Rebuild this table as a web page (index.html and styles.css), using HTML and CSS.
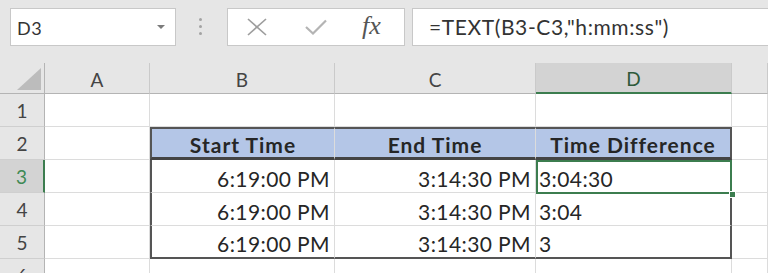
FILE: index.html
```html
<html>
<head>
<meta charset="utf-8">
<link rel="stylesheet" href="styles.css">
<title>Time difference</title>
</head>
<body>
    <div class="toolbar">
        <div class="nameBox">
            <span>D3</span>
            <svg class="dropArrow" width="8" height="4" viewBox="0 0 8 4"><polygon points="0,0 8,0 4,4" fill="#7b7b7b"/></svg>
        </div>
        <div class="grip"><i></i><i></i><i></i></div>
        <div class="fxButtons">
            <svg class="cancel" width="20" height="18" viewBox="0 0 20 18">
                <line x1="1" y1="1" x2="19" y2="17" stroke="#9d9d9d" stroke-width="1.6"/>
                <line x1="19" y1="1" x2="1" y2="17" stroke="#9d9d9d" stroke-width="1.6"/>
            </svg>
            <svg class="enter" width="22" height="16" viewBox="0 0 22 16">
                <polyline points="1,8 8,14.5 21,1.5" fill="none" stroke="#b4b4b4" stroke-width="2.2"/>
            </svg>
            <span class="fx">fx</span>
        </div>
        <div class="formula">=TEXT(B3-C3,"h:mm:ss")</div>
    </div>

    <div class="sheet">
        <!-- column headers -->
        <div class="c corner">
            <svg width="24" height="22" viewBox="0 0 24 22"><polygon points="24,0 24,22 0,22" fill="#bcbcbc"/></svg>
        </div>
        <div class="c ch">A</div>
        <div class="c ch">B</div>
        <div class="c ch">C</div>
        <div class="c ch selCol">D</div>
        <div class="c ch"></div>

        <!-- row 1 -->
        <div class="c rh">1</div>
        <div class="c"></div>
        <div class="c"></div>
        <div class="c"></div>
        <div class="c"></div>
        <div class="c"></div>

        <!-- row 2 -->
        <div class="c rh">2</div>
        <div class="c"></div>
        <div class="c th leftEdge">Start Time</div>
        <div class="c th">End Time</div>
        <div class="c th rightEdge">Time Difference</div>
        <div class="c"></div>

        <!-- row 3 -->
        <div class="c rh selRow">3</div>
        <div class="c"></div>
        <div class="c num leftEdge">6:19:00 PM</div>
        <div class="c num">3:14:30 PM</div>
        <div class="c txt rightEdge active">3:04:30<div class="selection"><div class="handle"></div></div></div>
        <div class="c"></div>

        <!-- row 4 -->
        <div class="c rh">4</div>
        <div class="c"></div>
        <div class="c num leftEdge">6:19:00 PM</div>
        <div class="c num">3:14:30 PM</div>
        <div class="c txt rightEdge">3:04</div>
        <div class="c"></div>

        <!-- row 5 -->
        <div class="c rh">5</div>
        <div class="c"></div>
        <div class="c num leftEdge bottomEdge">6:19:00 PM</div>
        <div class="c num bottomEdge">3:14:30 PM</div>
        <div class="c txt rightEdge bottomEdge">3</div>
        <div class="c"></div>

        <!-- row 6 -->
        <div class="c rh">6</div>
        <div class="c"></div>
        <div class="c"></div>
        <div class="c"></div>
        <div class="c"></div>
        <div class="c"></div>
    </div>
</body>
</html>
```

FILE: styles.css
```css
* {box-sizing: border-box}
body {margin: 0;
      width: 768px;
      height: 273px;
      overflow: hidden;
      background-color: white;
      font-family: Lato, "Liberation Sans", sans-serif;
      color: #262626}

/* formula bar */
.toolbar {display: flex;
          align-items: flex-start;
          height: 63px;
          padding: 8px 0 0 10px;
          background-color: #e6e6e6}
.nameBox {display: flex;
          align-items: center;
          justify-content: space-between;
          width: 166px;
          height: 38px;
          padding: 2px 10px 0 6px;
          background-color: white;
          border: 1px solid #c8c8c8;
          font-size: 18px;
          letter-spacing: 0.5px;
          color: #333}
.dropArrow {margin-top: -2px}
.grip {display: flex;
       flex-direction: column;
       gap: 4px;
       margin: 10px 25px 0 23px}
.grip i {display: block;
         width: 3px;
         height: 3px;
         border-radius: 50%;
         background-color: #a3a3a3}
.fxButtons {display: flex;
            align-items: center;
            width: 178px;
            height: 38px;
            padding-left: 19px;
            background-color: white;
            border: 1px solid #c8c8c8}
.enter {margin-left: 38px}
.fx {margin: 0 0 2px 35px;
     font-family: "Liberation Serif", serif;
     font-style: italic;
     font-size: 26px;
     color: #555}
.formula {flex: 1;
          display: flex;
          align-items: center;
          height: 38px;
          margin: 0 -2px 0 7px;
          padding: 0 0 1px 16px;
          background-color: white;
          border: 1px solid #c8c8c8;
          font-size: 21px;
          letter-spacing: 0.6px;
          color: #333}

/* worksheet grid */
.sheet {display: grid;
        grid-template-columns: 45px 105px 185px 201px 196px 1fr;
        grid-template-rows: 31px;
        grid-auto-rows: 33px}
.c {display: flex;
    align-items: flex-end;
    padding: 0 4px 1px 4px;
    font-size: 21px;
    letter-spacing: 0.4px;
    white-space: nowrap;
    border-right: 1px solid #dcdcdc;
    border-bottom: 1px solid #dcdcdc}
.ch {justify-content: center;
     padding-bottom: 2px;
     font-size: 19px;
     letter-spacing: 0;
     color: #444;
     background-color: #e6e6e6;
     border-right-color: #cacaca;
     border-bottom-color: #b4b4b4}
.corner {justify-content: flex-end;
         padding: 0 3px 3px 0;
         background-color: #e6e6e6;
         border-right-color: #b4b4b4;
         border-bottom-color: #b4b4b4}
.corner svg {display: block}
.rh {justify-content: center;
     align-items: center;
     padding: 1px 0 0 0;
     font-size: 19px;
     letter-spacing: 0;
     color: #444;
     background-color: #e6e6e6;
     border-right-color: #b4b4b4;
     border-bottom-color: #cfcfcf}
.selCol {background-color: #d3d3d3;
         color: #2e5a3a;
         border-bottom: 2px solid #3c7d4f}
.selRow {background-color: #d3d3d3;
         color: #3f8a55;
         border-right: 2px solid #3c7d4f}

/* the B2:D5 table */
.th {justify-content: center;
     padding-bottom: 0;
     font-weight: bold;
     letter-spacing: 1px;
     background-color: #b4c6e7;
     border-top: 2px solid #555;
     border-bottom: 3px solid #444}
.num {justify-content: flex-end}
.txt {justify-content: flex-start;
      padding-left: 3px}
.leftEdge {border-left: 2px solid #555}
.rightEdge {border-right: 2px solid #555}
.bottomEdge {border-bottom: 2px solid #555}

/* active cell */
.active {position: relative}
.selection {position: absolute;
            top: 0;
            left: 0;
            right: -2px;
            bottom: -2px;
            border: 2px solid #3c7d4f}
.handle {position: absolute;
         right: -6px;
         bottom: -6px;
         width: 7px;
         height: 7px;
         background-color: #3c7d4f;
         border: 1px solid white}
```
